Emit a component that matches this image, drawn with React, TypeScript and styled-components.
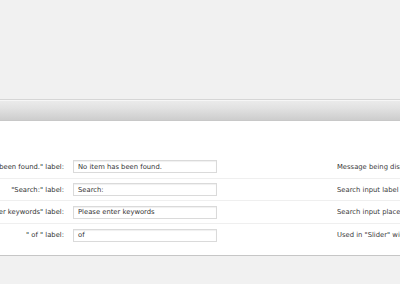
import React from "react";
import styled, { createGlobalStyle } from "styled-components";

const Global = createGlobalStyle`
  html, body { margin: 0; padding: 0; background: #f1f1f1; }
  body { width: 400px; height: 284px; overflow: hidden; font-family: "DejaVu Sans", Verdana, sans-serif; -webkit-font-smoothing: antialiased; }
`;

const Page = styled.div`
  display: flex;
  flex-direction: column;
  width: 400px;
`;

const TopArea = styled.div`
  height: 99px;
  background: #f1f1f1;
`;

const HeaderBar = styled.div`
  height: 20px;
  border-top: 1px solid #d6d6d6;
  box-shadow: inset 0 1px 0 #f6f6f6;
  background: linear-gradient(#ececec 0%, #e2e2e2 40%, #cdcdcd 100%);
  border-bottom: 1px solid #c8c8c8;
`;

const Panel = styled.div`
  background: #ffffff;
  padding: 35px 0 8px;
  border-bottom: 1px solid #c6c6c6;
`;

const Row = styled.div<{ $last?: boolean }>`
  display: grid;
  grid-template-columns: 64px 153px 120px 1fr;
  align-items: center;
  height: 22.7px;
  border-bottom: ${(p) => (p.$last ? "none" : "1px solid #efefef")};
  box-sizing: border-box;
`;

const Label = styled.div`
  text-align: right;
  white-space: nowrap;
  direction: rtl;
  overflow: visible;
  font-size: 6.8px;
  color: #333;
`;

const LabelInner = styled.span`
  direction: ltr;
  unicode-bidi: embed;
`;

const InputCell = styled.div`
  padding-left: 9px;
  display: flex;
`;

const Field = styled.div`
  width: 144px;
  height: 13px;
  box-sizing: border-box;
  border: 1px solid #dadada;
  box-shadow: inset 0 1px 1px #f0f0f0;
  font-size: 6.8px;
  color: #333;
  display: flex;
  align-items: center;
  padding-left: 4px;
  white-space: nowrap;
`;

const Desc = styled.div`
  white-space: nowrap;
  overflow: hidden;
  font-size: 6.8px;
  color: #3a3a3a;
`;

const Spacer = styled.div``;

const rows = [
  { label: '"No item has been found." label:', value: "No item has been found.", desc: "Message being displayed when no items found" },
  { label: '"Search:" label:', value: "Search:", desc: "Search input label" },
  { label: '"Please enter keywords" label:', value: "Please enter keywords", desc: "Search input placeholder" },
  { label: '" of " label:', value: "of", desc: 'Used in "Slider" widget' },
];

export default function App() {
  return (
    <Page>
      <Global />
      <TopArea />
      <HeaderBar />
      <Panel>
        {rows.map((r, i) => (
          <Row key={i} $last={i === rows.length - 1}>
            <Label>
              <LabelInner>{r.label}</LabelInner>
            </Label>
            <InputCell>
              <Field>{r.value}</Field>
            </InputCell>
            <Spacer />
            <Desc>{r.desc}</Desc>
          </Row>
        ))}
      </Panel>
    </Page>
  );
}
